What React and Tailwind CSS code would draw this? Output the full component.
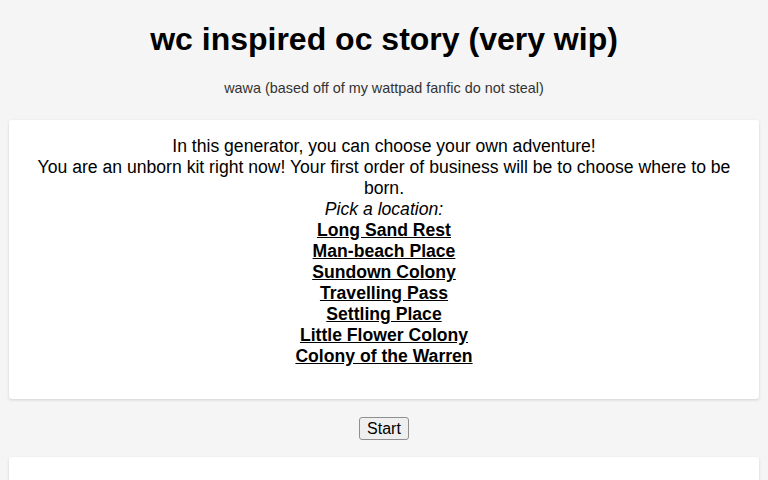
import React from "react";

const locations = [
  "Long Sand Rest",
  "Man-beach Place",
  "Sundown Colony",
  "Travelling Pass",
  "Settling Place",
  "Little Flower Colony",
  "Colony of the Warren",
];

const App = () => {
  return (
    <div className="min-h-[480px] bg-[#f5f5f5] px-[9px] font-['Liberation_Sans',Arial,sans-serif] text-black">
      {/* Header */}
      <h1 className="pt-[21px] text-center text-[32px] font-bold leading-[37px]">
        wc inspired oc story (very wip)
      </h1>
      <p className="mt-[22px] text-center text-[14.4px] leading-[16px] text-[#333]">
        wawa (based off of my wattpad fanfic do not steal)
      </p>

      {/* Story card */}
      <div className="mt-[24px] rounded-[3px] bg-white px-4 pt-[16px] pb-[32px] text-center text-[17.6px] leading-[21px] shadow-[0_1px_3px_rgba(0,0,0,0.15)]">
        <div>In this generator, you can choose your own adventure!</div>
        <div>
          You are an unborn kit right now! Your first order of business will be
          to choose where to be born.
        </div>
        <div className="italic">Pick a location:</div>
        {locations.map((loc) => (
          <div key={loc}>
            <a href="#" className="font-bold underline">
              {loc}
            </a>
          </div>
        ))}
      </div>

      {/* Start */}
      <div className="flex justify-center pt-[18px] pb-[17px]">
        <button className="h-[23px] rounded-[3px] border border-[#8f8f8f] bg-[#efefef] px-[7px] text-[16px] leading-[19px]">
          Start
        </button>
      </div>

      <div className="h-[60px] rounded-[3px] bg-white shadow-[0_1px_3px_rgba(0,0,0,0.15)]" />
    </div>
  );
};

export default App;
